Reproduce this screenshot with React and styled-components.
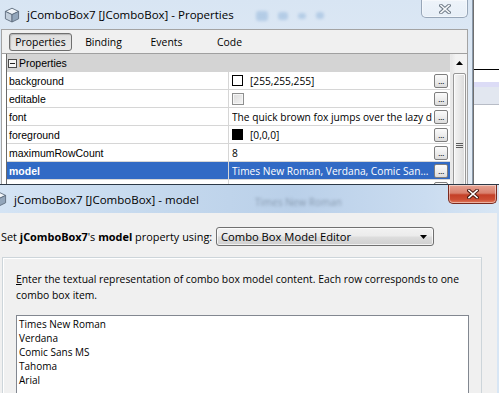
import React from "react";
import styled, { createGlobalStyle } from "styled-components";

const GlobalStyle = createGlobalStyle`
  html, body { margin: 0; padding: 0; background: #ffffff; }
  body { font-family: "Open Sans", "Noto Sans", sans-serif; }
  * { box-sizing: border-box; }
`;

const Desktop = styled.div`
  position: relative;
  width: 499px;
  height: 393px;
  overflow: hidden;
  background: #ffffff;
`;

/* window partly visible at the right edge, behind everything */
const BackWindow = styled.div`
  position: absolute;
  left: 473px;
  top: 0;
  width: 30px;
  height: 240px;
  border-left: 1px solid #6f6f6f;
  background: #ffffff;
  display: flex;
  flex-direction: column;
`;

const BackStrip = styled.div`
  flex-shrink: 0;
  height: ${(p) => p.$h}px;
  background: ${(p) => p.$bg};
  border-bottom: ${(p) => (p.$line ? `1px solid ${p.$line}` : "none")};
`;

const Win = styled.div`
  position: absolute;
  left: ${(p) => p.$x}px;
  top: ${(p) => p.$y}px;
  width: ${(p) => p.$w}px;
  height: ${(p) => p.$h}px;
  display: flex;
  flex-direction: column;
  border: 1px solid ${(p) => (p.$active ? "#2c3947" : "#8b9aab")};
  background: ${(p) =>
    p.$active
      ? "linear-gradient(90deg, #d6e5f5 0%, #c4d8ed 35%, #bad0e9 60%, #cadcf0 85%, #d9e7f5 100%)"
      : "linear-gradient(180deg, #d8e5f3 0%, #e3ecf6 40%, #e8f0f8 100%)"};
`;

const TitleBar = styled.div`
  flex-shrink: 0;
  display: flex;
  align-items: center;
  height: ${(p) => p.$h}px;
  padding: 0 ${(p) => p.$pr}px 0 ${(p) => p.$pl}px;
`;

const TitleText = styled.span`
  margin-left: 7px;
  font-family: "Open Sans", "Noto Sans", sans-serif;
  font-size: 11.5px;
  color: #000000;
  white-space: nowrap;
`;

/* things behind the glass, blurred */
const GhostRow = styled.div`
  display: flex;
  align-items: center;
  gap: 10px;
  margin-left: ${(p) => p.$ml}px;
  margin-top: ${(p) => p.$mt || 0}px;
  filter: blur(1.4px);
  opacity: 0.5;
`;

const GhostBlob = styled.span`
  width: ${(p) => p.$w}px;
  height: ${(p) => p.$h}px;
  border-radius: 3px;
  background: #8fb3d9;
`;

const GhostText = styled.span`
  font-size: 10px;
  color: #4f5e70;
  white-space: nowrap;
`;

const CloseBtn = styled.div`
  margin-left: auto;
  align-self: flex-start;
  width: ${(p) => p.$w}px;
  height: ${(p) => p.$h}px;
  border: 1px solid ${(p) => (p.$active ? "#7a2a1f" : "#97a6b8")};
  border-top: none;
  border-radius: 0 0 5px 5px;
  background: ${(p) =>
    p.$active
      ? "linear-gradient(180deg, #e6a393 0%, #d9806d 45%, #c43f27 55%, #cc4d33 80%, #e0795c 100%)"
      : "linear-gradient(180deg, rgba(255,255,255,0.55) 0%, rgba(236,242,249,0.7) 100%)"};
  box-shadow: inset 0 0 0 1px rgba(255, 255, 255, 0.45);
  display: flex;
  align-items: center;
  justify-content: center;
`;

const Body = styled.div`
  flex: 1;
  min-height: 0;
  min-width: 0;
  margin: 0 ${(p) => p.$mr}px 0 ${(p) => p.$ml}px;
  background: #f0f0f0;
  border: ${(p) => (p.$bordered ? "1px solid #a3a3a3" : "none")};
  border-bottom: none;
  display: flex;
  flex-direction: column;
`;

/* property sheet */
const TabBar = styled.div`
  flex-shrink: 0;
  height: 24px;
  display: flex;
  align-items: flex-start;
  padding: 3px 0 0 7px;
  border-bottom: 1px solid #a0a0a0;
`;

const Tab = styled.div`
  width: 63px;
  height: 18px;
  display: flex;
  align-items: center;
  justify-content: center;
  font-size: 10.4px;
  color: #000000;
  border: 1px solid ${(p) => (p.$selected ? "#6f6f6f" : "transparent")};
  border-radius: 3px;
  background: ${(p) =>
    p.$selected ? "linear-gradient(180deg, #dedede 0%, #e8e8e8 100%)" : "transparent"};
  box-shadow: ${(p) => (p.$selected ? "inset 1px 1px 1px rgba(0,0,0,0.18)" : "none")};
`;

const Sheet = styled.div`
  flex: 1;
  min-height: 0;
  min-width: 0;
  display: flex;
  background: #ffffff;
  padding-left: 4px;
`;

const Table = styled.div`
  flex: 1;
  min-width: 0;
  display: flex;
  flex-direction: column;
  border-left: 1px solid #6a6a6a;
`;

const CategoryRow = styled.div`
  height: 18px;
  flex-shrink: 0;
  display: flex;
  align-items: center;
  gap: 2px;
  padding-left: 1px;
  background: #d4d4d4;
  font-family: "Liberation Sans", Arial, sans-serif;
  font-size: 10.5px;
  color: #000000;
`;

const Collapse = styled.span`
  position: relative;
  width: 9px;
  height: 9px;
  border: 1px solid #4a4a4a;
  background: #f4f4f4;
  &::after {
    content: "";
    position: absolute;
    left: 1px;
    right: 1px;
    top: 3px;
    height: 1px;
    background: #222222;
  }
`;

const Row = styled.div`
  height: 18px;
  flex-shrink: 0;
  min-width: 0;
  display: flex;
  border-bottom: 1px solid #d6d6d6;
  background: ${(p) => (p.$selected ? "#316ac5" : "#ffffff")};
  color: ${(p) => (p.$selected ? "#ffffff" : "#000000")};
`;

const NameCell = styled.div`
  width: 222px;
  flex-shrink: 0;
  display: flex;
  align-items: center;
  padding-left: 2px;
  border-right: 1px solid #d6d6d6;
  font-family: "Liberation Sans", Arial, sans-serif;
  font-size: 10.5px;
  font-weight: ${(p) => (p.$bold ? 700 : 400)};
  white-space: nowrap;
  overflow: hidden;
`;

const ValueCell = styled.div`
  flex: 1;
  min-width: 0;
  display: flex;
  align-items: center;
  padding-left: 3px;
`;

const Swatch = styled.span`
  width: 11px;
  height: 11px;
  flex-shrink: 0;
  margin-right: 7px;
  border: 1px solid #000000;
  background: ${(p) => p.$color};
`;

const CheckBox = styled.span`
  width: 12px;
  height: 12px;
  flex-shrink: 0;
  border: 1px solid #8e8f8f;
  background: linear-gradient(135deg, #dcdcdc 0%, #f4f4f4 100%);
  box-shadow: inset 0 0 0 1px #f6f6f6;
`;

const ValueText = styled.span`
  flex: 1;
  min-width: 0;
  margin-right: 2px;
  font-family: "Open Sans", "Noto Sans", sans-serif;
  font-size: 10.2px;
  white-space: nowrap;
  overflow: hidden;
  text-overflow: ${(p) => (p.$ellipsis ? "ellipsis" : "clip")};
`;

const Spacer = styled.span`
  flex: 1;
`;

const DotsButton = styled.span`
  width: 14px;
  height: 14px;
  flex-shrink: 0;
  margin-right: 2px;
  border: 1px solid #7e7e7e;
  border-radius: 2px;
  background: linear-gradient(180deg, #fbfbfb 0%, #ececec 55%, #dcdcdc 100%);
  display: flex;
  align-items: flex-end;
  justify-content: center;
  padding-bottom: 1px;
  font-family: "Liberation Sans", Arial, sans-serif;
  font-size: 9px;
  line-height: 9px;
  letter-spacing: -0.5px;
  color: #000000;
`;

const ScrollBar = styled.div`
  width: 17px;
  flex-shrink: 0;
  display: flex;
  flex-direction: column;
  align-items: center;
  background: linear-gradient(90deg, #e6e6e6 0%, #f2f2f2 30%, #f2f2f2 100%);
  border-left: 1px solid #e9e9e9;
`;

const ScrollArrow = styled.div`
  height: 17px;
  width: 100%;
  display: flex;
  align-items: center;
  justify-content: center;
`;

const ScrollThumb = styled.div`
  width: 13px;
  height: 146px;
  margin-top: 2px;
  border: 1px solid #979797;
  border-radius: 2px;
  background: linear-gradient(90deg, #f4f4f4 0%, #e8e8e8 50%, #d9d9d9 100%);
  box-shadow: inset 0 0 0 1px #fbfbfb;
  display: flex;
  align-items: center;
  justify-content: center;
`;

/* model dialog */
const ModelRow = styled.div`
  display: flex;
  align-items: center;
  margin-top: 14px;
  padding-left: 13px;
`;

const Label = styled.span`
  width: 215px;
  flex-shrink: 0;
  font-family: "Open Sans", "Noto Sans", sans-serif;
  font-size: 10.9px;
  color: #000000;
  white-space: nowrap;
  b {
    font-weight: 700;
  }
`;

const Combo = styled.div`
  width: 218px;
  height: 19px;
  display: flex;
  align-items: center;
  justify-content: space-between;
  padding: 0 6px 0 4px;
  border: 1px solid #707070;
  border-radius: 3px;
  background: linear-gradient(180deg, #f2f2f2 0%, #ebebeb 48%, #dddddd 52%, #cfcfcf 100%);
  box-shadow: inset 0 0 0 1px rgba(255, 255, 255, 0.7);
  font-size: 11.2px;
  color: #000000;
`;

const Group = styled.div`
  flex: 1;
  margin: 11px 15px 0 14px;
  padding: 13px 12px 0 13px;
  border: 1px solid #cdd5da;
  border-bottom: none;
  box-shadow: inset 1px 1px 0 #ffffff;
  display: flex;
  flex-direction: column;
`;

const Hint = styled.p`
  margin: 0;
  font-size: 10.35px;
  line-height: 16px;
  color: #000000;
  u {
    text-decoration: underline;
  }
`;

const ItemsBox = styled.div`
  flex: 1;
  margin-top: 12px;
  padding: 1px 2px;
  background: #ffffff;
  border: 1px solid #828790;
  border-bottom: none;
`;

const Item = styled.div`
  height: 14px;
  line-height: 14px;
  font-size: 10px;
  color: #000000;
`;

const CubeIcon = () => (
  <svg width="16" height="16" viewBox="0 0 16 16">
    <path d="M8 1.2 L14.6 4.4 L8 7.6 L1.4 4.4 Z" fill="#f1f5f9" stroke="#5d6c7d" strokeWidth="0.9" strokeLinejoin="round" />
    <path d="M1.4 4.4 L8 7.6 L8 15 L1.4 11.8 Z" fill="#c3cfdc" stroke="#5d6c7d" strokeWidth="0.9" strokeLinejoin="round" />
    <path d="M14.6 4.4 L8 7.6 L8 15 L14.6 11.8 Z" fill="#93a6bb" stroke="#5d6c7d" strokeWidth="0.9" strokeLinejoin="round" />
  </svg>
);

const CloseGlyph = ({ outline, fill }) => (
  <svg width="12" height="10" viewBox="0 0 12 10">
    <path d="M2 1.5 L10 8.5 M10 1.5 L2 8.5" stroke={outline} strokeWidth="3.6" strokeLinecap="square" />
    <path d="M2 1.5 L10 8.5 M10 1.5 L2 8.5" stroke={fill} strokeWidth="1.6" strokeLinecap="square" />
  </svg>
);

const Triangle = ({ up }) => (
  <svg width="7" height="4" viewBox="0 0 7 4">
    <path d={up ? "M0 4 L3.5 0 L7 4 Z" : "M0 0 L7 0 L3.5 4 Z"} fill="#000000" />
  </svg>
);

const Grip = () => (
  <svg width="7" height="6" viewBox="0 0 7 6">
    <path d="M0 0.5 H7 M0 2.5 H7 M0 4.5 H7" stroke="#5c5c5c" strokeWidth="1" />
  </svg>
);

const properties = [
  { name: "background", swatch: "#ffffff", value: "[255,255,255]" },
  { name: "editable", check: true },
  { name: "font", value: "The quick brown fox jumps over the lazy dog" },
  { name: "foreground", swatch: "#000000", value: "[0,0,0]" },
  { name: "maximumRowCount", value: "8" },
  { name: "model", value: "Times New Roman, Verdana, Comic Sans MS, Tahoma, Arial", selected: true },
  { name: "selectedIndex", value: "0" },
];

const items = ["Times New Roman", "Verdana", "Comic Sans MS", "Tahoma", "Arial"];

export default function App() {
  return (
    <Desktop>
      <GlobalStyle />

      <BackWindow>
        <BackStrip $h={70} $bg="#ffffff" $line="#000000" />
        <BackStrip $h={12} $bg="#ffffff" />
        <BackStrip $h={5} $bg="#dcdcf6" />
        <BackStrip $h={18} $bg="#e2e7f0" $line="#b7bcc6" />
      </BackWindow>

      <Win $x={-7} $y={-1} $w={480} $h={300}>
        <TitleBar $h={29} $pl={10} $pr={4}>
          <CubeIcon />
          <TitleText>jComboBox7 [JComboBox] - Properties</TitleText>
          <GhostRow $ml={22} $mt={2}>
            <GhostBlob $w={12} $h={10} />
            <GhostBlob $w={10} $h={8} />
            <GhostBlob $w={8} $h={6} />
            <GhostBlob $w={8} $h={7} />
          </GhostRow>
          <CloseBtn $w={47} $h={18}>
            <CloseGlyph outline="#6f7b88" fill="#f7f9fb" />
          </CloseBtn>
        </TitleBar>
        <Body $ml={7} $mr={4} $bordered>
          <TabBar>
            <Tab $selected>Properties</Tab>
            <Tab>Binding</Tab>
            <Tab>Events</Tab>
            <Tab>Code</Tab>
          </TabBar>
          <Sheet>
            <Table>
              <CategoryRow>
                <Collapse />
                Properties
              </CategoryRow>
              {properties.map((p) => (
                <Row key={p.name} $selected={p.selected}>
                  <NameCell $bold={p.selected}>{p.name}</NameCell>
                  <ValueCell>
                    {p.swatch && <Swatch $color={p.swatch} />}
                    {p.check && <CheckBox />}
                    {p.value ? <ValueText $ellipsis={p.selected}>{p.value}</ValueText> : <Spacer />}
                    <DotsButton>...</DotsButton>
                  </ValueCell>
                </Row>
              ))}
            </Table>
            <ScrollBar>
              <ScrollArrow>
                <Triangle up />
              </ScrollArrow>
              <ScrollThumb>
                <Grip />
              </ScrollThumb>
            </ScrollBar>
          </Sheet>
        </Body>
      </Win>

      <Win $x={-20} $y={184} $w={525} $h={230} $active>
        <TitleBar $h={28} $pl={10} $pr={7}>
          <CubeIcon />
          <TitleText>jComboBox7 [JComboBox] - model</TitleText>
          <GhostRow $ml={56} $mt={6}>
            <GhostText aria-hidden="true">Times New Roman</GhostText>
          </GhostRow>
          <CloseBtn $w={49} $h={19} $active>
            <CloseGlyph outline="#4a1810" fill="#ffffff" />
          </CloseBtn>
        </TitleBar>
        <Body $ml={7} $mr={7}>
          <ModelRow>
            <Label>
              Set <b>jComboBox7</b>'s <b>model</b> property using:
            </Label>
            <Combo>
              <span>Combo Box Model Editor</span>
              <Triangle />
            </Combo>
          </ModelRow>
          <Group>
            <Hint>
              <u>E</u>nter the textual representation of combo box model content. Each row corresponds to one
              combo box item.
            </Hint>
            <ItemsBox>
              {items.map((it) => (
                <Item key={it}>{it}</Item>
              ))}
            </ItemsBox>
          </Group>
        </Body>
      </Win>
    </Desktop>
  );
}
